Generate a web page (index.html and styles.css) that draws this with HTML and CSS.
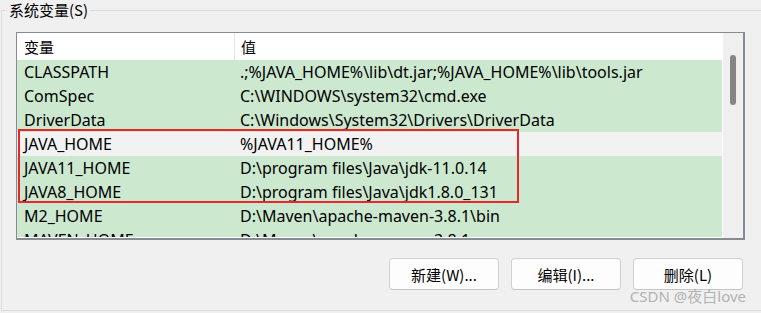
FILE: index.html
```html
<!DOCTYPE html>
<html lang="zh-CN">
<head>
  <meta charset="UTF-8" />
  <meta name="viewport" content="width=device-width, initial-scale=1.0" />
  <title>系统变量</title>
  <link rel="stylesheet" href="styles.css">
</head>
<body>
  <fieldset class="group">
    <legend>系统变量(S)</legend>

    <div class="listbox">
      <div class="table">
        <div class="row head">
          <div class="cell name">变量</div>
          <div class="cell value">值</div>
        </div>
        <div class="rows">
          <div class="row"><div class="cell name">CLASSPATH</div><div class="cell value">.;%JAVA_HOME%\lib\dt.jar;%JAVA_HOME%\lib\tools.jar</div></div>
          <div class="row"><div class="cell name">ComSpec</div><div class="cell value">C:\WINDOWS\system32\cmd.exe</div></div>
          <div class="row"><div class="cell name">DriverData</div><div class="cell value">C:\Windows\System32\Drivers\DriverData</div></div>
          <div class="row current"><div class="cell name">JAVA_HOME</div><div class="cell value">%JAVA11_HOME%</div></div>
          <div class="row"><div class="cell name">JAVA11_HOME</div><div class="cell value">D:\program files\Java\jdk-11.0.14</div></div>
          <div class="row"><div class="cell name">JAVA8_HOME</div><div class="cell value">D:\program files\Java\jdk1.8.0_131</div></div>
          <div class="row"><div class="cell name">M2_HOME</div><div class="cell value">D:\Maven\apache-maven-3.8.1\bin</div></div>
          <div class="row"><div class="cell name">MAVEN_HOME</div><div class="cell value">D:\Maven\apache-maven-3.8.1</div></div>

          <!-- red frame round the three java rows -->
          <div class="mark"></div>
        </div>
      </div>
      <div class="scrollbar">
        <div class="thumb"></div>
      </div>
    </div>

    <div class="buttons">
      <button type="button">新建(W)...</button>
      <button type="button">编辑(I)...</button>
      <button type="button">删除(L)</button>
    </div>
  </fieldset>

  <div class="watermark">CSDN @夜白love</div>
</body>
</html>
```

FILE: styles.css
```css
body {
  margin: 0;
  background-color: #f0f0f0;
  font-family: "Noto Sans", "Noto Sans CJK SC", sans-serif;
  font-size: 16px;
  color: #000;
  overflow: hidden;
  position: relative;
  height: 313px;
}
.group {
  margin: 0 -20px 0 1px;
  padding: 0 0 20px 0;
  border: 1px solid #dcdcdc;
  min-width: 0;
}
.group legend {
  margin-left: 5px;
  padding: 0 2px;
  line-height: 20px;
  font-family: "Noto Sans CJK SC", "Noto Sans", sans-serif;
  font-size: 15px;
}
.listbox {
  display: flex;
  margin: 12px 0 0 14px;
  width: 726px;
  height: 205px;
  border-style: solid;
  border-color: #878c93;
  border-width: 1px 2px 2px 1px;
  background: #fff;
}
.table {
  width: 705px;
  height: 204px;
  overflow: hidden;
}
.row {
  display: flex;
  height: 24px;
  line-height: 24px;
  background: #cce8cf;
  white-space: nowrap;
}
.row.head {
  height: 27px;
  line-height: 27px;
  background: #fff;
  font-family: "Noto Sans CJK SC", "Noto Sans", sans-serif;
  font-size: 15px;
}
.row.current {
  background: #f2f2f2;
}
.cell.name {
  width: 210px;
  padding-left: 7px;
  flex-shrink: 0;
}
.cell.value {
  padding-left: 6px;
}
.row.head .cell.name {
  border-right: 1px solid #e5e5e5;
}
.rows {
  position: relative;
}
.mark {
  position: absolute;
  left: 1px;
  top: 69px;
  width: 497px;
  height: 70px;
  border: 2px solid #e8262b;
}
.scrollbar {
  width: 20px;
  border-left: 1px solid #fff;
  background: #f0f0f0;
  position: relative;
}
.thumb {
  position: absolute;
  left: 7px;
  top: 22px;
  width: 6px;
  height: 50px;
  border-radius: 3px;
  background: #858585;
}
.buttons {
  display: flex;
  justify-content: flex-end;
  gap: 12px;
  width: 729px;
  margin: 18px 0 0 14px;
  padding-right: 2px;
  box-sizing: border-box;
}
.buttons button {
  width: 110px;
  height: 32px;
  background: #fdfdfd;
  border: 1px solid #d0d0d0;
  border-bottom-color: #c4c4c4;
  border-radius: 4px;
  font-family: "Noto Sans CJK SC", "Noto Sans", sans-serif;
  font-size: 15px;
  color: #000;
  padding: 0;
}
.watermark {
  position: absolute;
  right: 15px;
  top: 285px;
  font-family: "Noto Sans", "Noto Sans CJK SC", sans-serif;
  font-size: 15px;
  color: rgba(140, 140, 140, 0.65);
}
```
